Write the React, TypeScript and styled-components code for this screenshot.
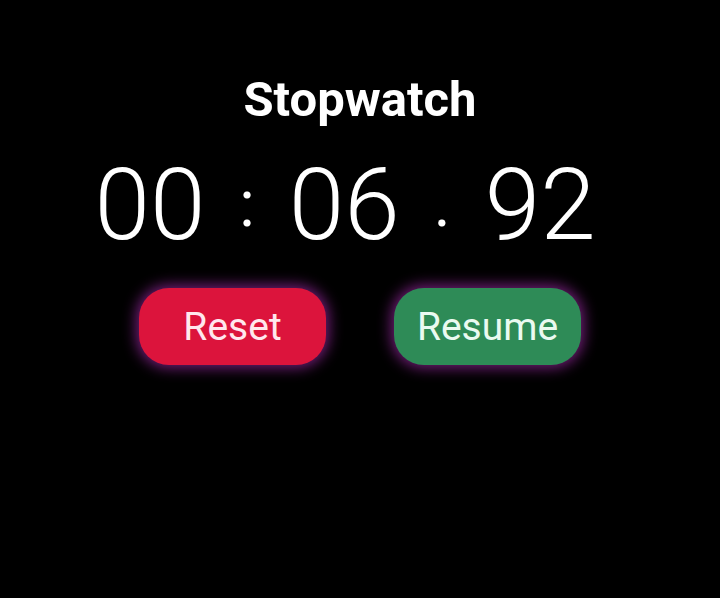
import React, { useState } from "react"
import styled, { createGlobalStyle } from "styled-components"

const GlobalStyle = createGlobalStyle`
	html, body {
		margin: 0;
		padding: 0;
		background: #000;
	}
	body {
		font-family: Roboto, "Noto Sans", sans-serif;
		color: #fff;
	}
`

const pad = (n: number) => String(n).padStart(2, "0")

const App: React.FC = () => {
	const [running, setRunning] = useState(false)
	const [time, setTime] = useState(692)

	const minutes = Math.floor(time / 6000)
	const seconds = Math.floor((time % 6000) / 100)
	const hundredths = time % 100

	return (
		<Wrapper>
			<GlobalStyle />
			<Title>Stopwatch</Title>
			<Display>
				<Digits>{pad(minutes)}</Digits>
				<Separator>:</Separator>
				<Digits>{pad(seconds)}</Digits>
				<Separator>.</Separator>
				<Digits>{pad(hundredths)}</Digits>
			</Display>
			<Controls>
				<Button $variant="reset" onClick={() => setTime(0)}>
					Reset
				</Button>
				<Button $variant="go" onClick={() => setRunning(!running)}>
					{running ? "Pause" : "Resume"}
				</Button>
			</Controls>
		</Wrapper>
	)
}

const Wrapper = styled.main`
	width: 720px;
	height: 598px;
	display: flex;
	flex-direction: column;
	align-items: center;
	padding-top: 72px;
	box-sizing: border-box;
`

const Title = styled.h1`
	margin: 0;
	font-size: 49px;
	font-weight: 700;
	line-height: 56px;
`

const Display = styled.div`
	display: flex;
	align-items: center;
	gap: 34px;
	margin-top: 18px;
	padding-right: 30px;
`

const Digits = styled.span`
	font-size: 100px;
	font-weight: 300;
	line-height: 117px;
`

const Separator = styled.span`
	font-size: 64px;
	font-weight: 400;
	line-height: 75px;
`

const Controls = styled.div`
	display: flex;
	gap: 68px;
	margin-top: 25px;
`

const Button = styled.button<{ $variant: "reset" | "go" }>`
	width: 187px;
	height: 77px;
	border: none;
	border-radius: 30px;
	font-family: Roboto, sans-serif;
	font-size: 39px;
	font-weight: 400;
	cursor: pointer;
	background: ${(p) => (p.$variant === "reset" ? "#dc143c" : "#2e8b57")};
	color: ${(p) => (p.$variant === "reset" ? "#ffe8ee" : "#eafaf1")};
	box-shadow: 0 0 14px 3px rgba(190, 50, 200, 0.6);
`

export default App
